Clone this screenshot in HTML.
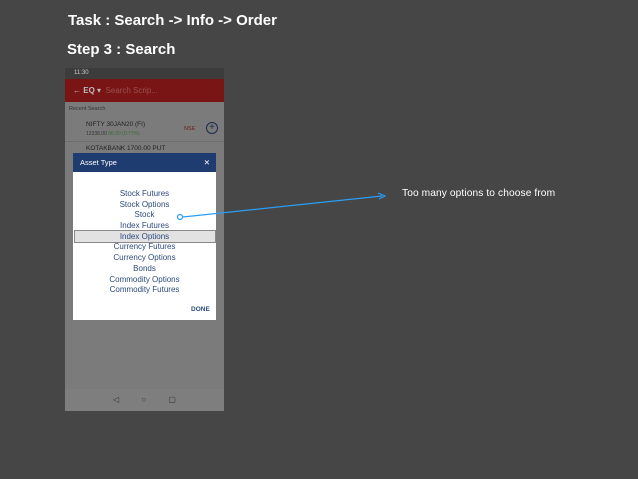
<html><head><style>
body{margin:0;width:638px;height:479px;background:#464646;position:relative;overflow:hidden;font-family:"Liberation Sans",sans-serif}
.a{position:absolute}
.t{color:#fff;font-weight:bold;font-size:15px}
.it{position:absolute;left:73px;width:143px;text-align:center;font-size:8px;color:#2c4a7c}
</style></head><body>
<div class="a t" style="left:68px;top:12px">Task : Search -&gt; Info -&gt; Order</div>
<div class="a t" style="left:67px;top:41px">Step 3 : Search</div>
<div class="a" style="left:65px;top:68px;width:159px;height:343px;background:#7b7b7b"></div>
<div class="a" style="left:65px;top:68px;width:159px;height:11px;background:#3c3c3c;color:#ccc;font-size:6px;line-height:11px;padding-left:9px;box-sizing:border-box">11:30</div>
<div class="a" style="left:65px;top:79px;width:159px;height:23px;background:#7a1515;color:#bbb;font-size:8px;line-height:23px;padding-left:8px;box-sizing:border-box">← <b>EQ</b> ▾ &nbsp;<span style="color:#9a5050">Search Scrip...</span></div>
<div class="a" style="left:69px;top:106px;font-size:5.5px;color:#333">Recent Search</div>
<div class="a" style="left:86px;top:121px;font-size:6.5px;color:#222">NIFTY 30JAN20 (FI)</div>
<div class="a" style="left:86px;top:131px;font-size:5px;color:#333">12338.00 <span style="color:#3a6a3a">86.00 (0.77%)</span></div>
<div class="a" style="left:184px;top:126px;font-size:5.5px;color:#6a1a1a">NSE</div>
<div class="a" style="left:206px;top:122px;width:10px;height:10px;border:1.5px solid #1c2a4a;border-radius:50%;font-size:10px;line-height:10px;text-align:center;color:#1c2a4a">+</div>
<div class="a" style="left:65px;top:141px;width:159px;height:1px;background:#6e6e6e"></div>
<div class="a" style="left:86px;top:145px;font-size:6.5px;color:#222">KOTAKBANK 1700.00 PUT</div>
<div class="a" style="left:65px;top:389px;width:159px;height:22px;background:#7e7e7e;color:#333;font-size:8px;line-height:22px;text-align:center;word-spacing:20px">◁ ○ ▢</div>
<div class="a" style="left:73px;top:153px;width:143px;height:19px;background:#1f3c70;color:#fff;font-size:7.5px;line-height:19px;padding-left:7px;box-sizing:border-box">Asset Type<span style="position:absolute;right:6px">✕</span></div>
<div class="a" style="left:73px;top:172px;width:143px;height:148px;background:#fff"></div>
<div class="a" style="left:74px;top:230px;width:140px;height:11px;background:#e2e2e2;border:1px solid #888"></div>
<div class="it" style="top:189px">Stock Futures</div>
<div class="it" style="top:200px">Stock Options</div>
<div class="it" style="top:210px">Stock</div>
<div class="it" style="top:221px">Index Futures</div>
<div class="it" style="top:232px">Index Options</div>
<div class="it" style="top:242px">Currency Futures</div>
<div class="it" style="top:253px">Currency Options</div>
<div class="it" style="top:264px">Bonds</div>
<div class="it" style="top:275px">Commodity Options</div>
<div class="it" style="top:285px">Commodity Futures</div>
<div class="a" style="left:191px;top:306px;font-size:6.5px;font-weight:bold;color:#2c4a7c">DONE</div>
<svg class="a" style="left:0;top:0" width="638" height="479"><line x1="183" y1="217" x2="382" y2="196" stroke="#2a9df4" stroke-width="1.2"/><circle cx="180" cy="217" r="2.5" fill="#fff" stroke="#2a9df4" stroke-width="1.2"/><path d="M378 193 L385 196 L379 199" fill="none" stroke="#2a9df4" stroke-width="1.2"/></svg>
<div class="a" style="left:402px;top:188px;font-size:10.2px;color:#fff;letter-spacing:0.1px">Too many options to choose from</div>
</body></html>
